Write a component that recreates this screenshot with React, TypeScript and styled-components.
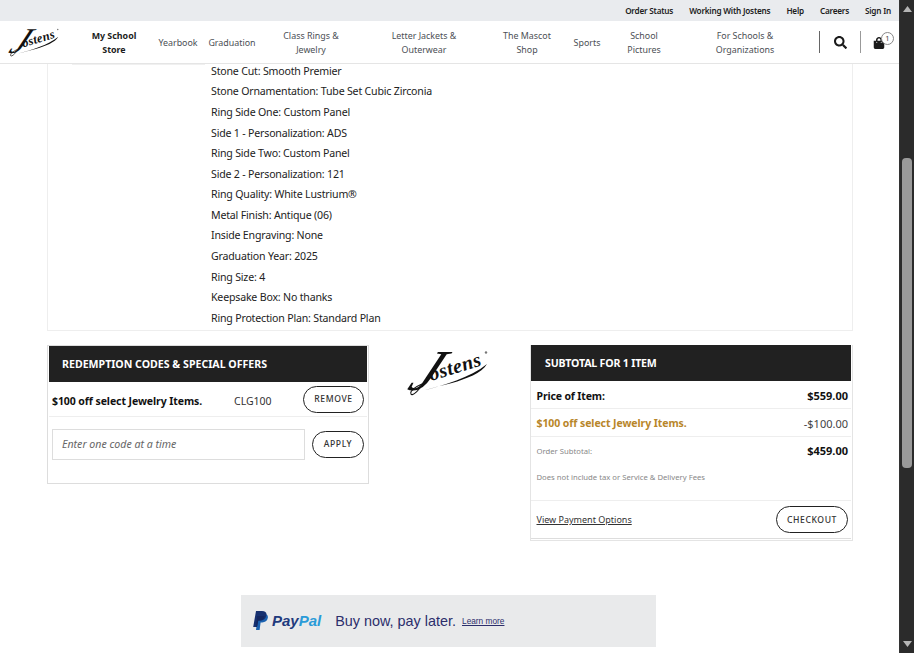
import React from "react";
import styled, { createGlobalStyle } from "styled-components";
import { FaSearch, FaShoppingBag } from "react-icons/fa";

const Global = createGlobalStyle`
  html, body { margin: 0; padding: 0; height: 653px; overflow: hidden; background: #fff; }
  * { box-sizing: border-box; }
  body { font-family: "Noto Sans", "Open Sans", sans-serif; color: #222; }
`;

const Shell = styled.div`display: flex; width: 914px; height: 653px; overflow: hidden;`;
const Page = styled.div`width: 899px; height: 653px; display: flex; flex-direction: column; overflow: hidden;`;

const Track = styled.div`width: 15px; height: 653px; background: #2b2b2b; display: flex; flex-direction: column; align-items: center; border-left: 1px solid #333;`;
const Arrow = styled.svg`width: 9px; height: 6px; flex: none; fill: #b5b5b5;`;
const ArrowUp = styled(Arrow)`margin-top: 6px;`;
const ArrowDown = styled(Arrow)`margin-top: auto; margin-bottom: 6px;`;
const Thumb = styled.div`width: 10px; height: 310px; margin-top: 146px; background: #9a9a9a; border-radius: 4px;`;

const TopBar = styled.div`height: 21px; background: #e9ebee; display: flex; justify-content: flex-end; align-items: center; gap: 16px; padding-right: 8px;`;
const TopLink = styled.a`font-size: 8.2px; font-weight: 600; letter-spacing: -0.22px; color: #1d1d1d; white-space: nowrap;`;

const Nav = styled.nav`height: 43px; display: flex; align-items: center; background: #fff; border-bottom: 1px solid #e5e5e5; flex: none; position: relative; z-index: 1;`;
const LogoCell = styled.div`width: 72px; flex: none; display: flex; padding-left: 10px; padding-top: 1px;`;
const NavItem = styled.a<{ $w: number; $bold?: boolean }>`
  width: ${p => p.$w}px; flex: none; text-align: center; font-size: 8.9px; line-height: 14px; padding-top: 2px;
  color: ${p => (p.$bold ? "#1c1c1c" : "#4c4f55")}; font-weight: ${p => (p.$bold ? 700 : 400)};
`;
const Tools = styled.div`display: flex; align-items: center; margin-left: 7px;`;
const ToolDivider = styled.div<{ $soft?: boolean }>`width: 1px; height: 22px; background: ${p => (p.$soft ? "#999" : "#666")};`;
const SearchCell = styled.div`width: 40px; display: flex; justify-content: center; color: #1a1a1a; font-size: 13px; line-height: 0;`;
const BagCell = styled.div`width: 39px; display: flex; justify-content: center; position: relative; color: #1a1a1a; font-size: 12px; line-height: 0; padding: 2px 3px 0 0;`;
const Badge = styled.span`position: absolute; top: -3px; left: 20px; width: 13px; height: 13px; border-radius: 50%; border: 1px solid #888; background: #fff; font-size: 7.5px; line-height: 11px; text-align: center; color: #444;`;

const Main = styled.main`flex: 1; padding: 0 47px; overflow: hidden; display: flex; flex-direction: column;`;
const ItemCard = styled.section`width: 806px; height: 267px; border: 1px solid #eee; border-top: 0; padding-left: 24px; flex: none; display: flex;`;
const ThumbEdge = styled.div`width: 133px; height: 1px; margin-right: 6px; background: #f0f0f0; flex: none;`;
const OptionList = styled.ul`list-style: none; margin: -3.2px 0 0; padding: 0;`;
const Option = styled.li`font-size: 10.6px; line-height: 20.58px; letter-spacing: -0.19px; color: #222; white-space: nowrap;`;

const Summary = styled.div`display: flex; align-items: flex-start; margin-top: 14px; width: 806px;`;
const CodeBox = styled.section`width: 322px; height: 139px; border: 1px solid #ddd; padding: 0 1px; flex: none;`;
const BoxHead = styled.h2<{ $h: number; $pad: number; $track?: number }>`margin: 0; height: ${p => p.$h}px; background: #212121; color: #fff; font-size: 10.6px; font-weight: 700; letter-spacing: ${p => p.$track ?? 0}px; display: flex; align-items: center; padding-left: ${p => p.$pad}px; white-space: nowrap;`;
const CodeRow = styled.div`height: 35px; border-bottom: 1px solid #eee; display: flex; align-items: center; padding: 0 3px;`;
const OfferName = styled.span`font-size: 10.5px; font-weight: 700; color: #111; width: 182px; white-space: nowrap; letter-spacing: -0.08px; padding-top: 3px;`;
const CodeValue = styled.span`font-size: 10.5px; color: #333; width: 69px; padding-top: 3px;`;
const Pill = styled.button<{ $w: number }>`width: ${p => p.$w}px; height: 27px; border: 1px solid #222; border-radius: 14px; background: #fff; font-family: inherit; font-size: 8.6px; font-weight: 500; letter-spacing: 0.6px; color: #333; padding: 0; flex: none;`;
const EntryRow = styled.div`display: flex; align-items: flex-start; padding: 12px 3px 0; gap: 7px;`;
const CodeInput = styled.div`width: 253px; height: 31px; border: 1px solid #ddd; display: flex; align-items: center; padding: 0 0 2px 9px; font-size: 10.6px; font-style: italic; color: #666;`;
const ApplyWrap = styled.div`padding-top: 1px;`;

const LogoColumn = styled.div`width: 161px; flex: none; display: flex; justify-content: center; padding-top: 5px; padding-right: 1px;`;

const TotalBox = styled.section`width: 323px; height: 196px; border: 1px solid #e4e4e4; border-top: 0; padding-right: 1px; flex: none;`;
const TotalRow = styled.div<{ $line?: boolean; $h?: number; $lift?: number }>`height: ${p => p.$h ?? 28}px; display: flex; justify-content: space-between; align-items: center; padding: ${p => p.$lift ?? 1}px 3px 0 5.5px; ${p => p.$line && "border-bottom: 1px solid #eee;"}`;
const TotalLabel = styled.span`font-size: 10.5px; font-weight: 700; color: #111; letter-spacing: -0.14px;`;
const PromoLabel = styled(TotalLabel)`color: #b8862a; letter-spacing: -0.08px;`;
const Amount = styled.span`font-size: 11px; font-weight: 700; color: #111;`;
const PlainAmount = styled.span`font-size: 11px; color: #444;`;
const Fine = styled.span`font-size: 7.7px; color: #888;`;
const FineRow = styled.div`height: 37px; padding: 0 5.5px 10px; display: flex; align-items: center; border-bottom: 1px solid #eee;`;
const FootRow = styled.div`height: 38px; display: flex; justify-content: space-between; align-items: center; padding: 0 3px 0 5.5px; border-bottom: 1px solid #ddd;`;
const PayLink = styled.a`font-size: 9px; color: #333; text-decoration: underline;`;

const Banner = styled.aside`margin: 54px 0 0 194px; width: 415px; height: 52px; background: #e9eaeb; flex: none; display: flex; align-items: center; padding: 0 0 1px 12px;`;
const PayMark = styled.svg`width: 15px; height: 19px; flex: none;`;
const PayWord = styled.span`margin-left: 4px; font: italic 700 15px "Liberation Sans", Arial, sans-serif; color: #1f3a7d;`;
const PayWordLight = styled.span`color: #2a9bd8;`;
const PayText = styled.span`margin-left: 14px; font: 14.4px "Liberation Sans", Arial, sans-serif; color: #2c2e6b; white-space: nowrap;`;
const PayLearn = styled.a`margin-left: 6px; font: 8.3px "Liberation Sans", Arial, sans-serif; color: #2c2e6b; text-decoration: underline;`;

const LogoSvg = styled.svg<{ $w: number }>`width: ${p => p.$w}px; height: auto; display: block; flex: none; overflow: visible;`;

const Logo = ({ width }: { width: number }) => (
  <LogoSvg $w={width} viewBox="0 0 78 46" role="img" aria-label="Jostens">
    <g fontFamily="'Liberation Serif', serif" fontStyle="italic" fill="#111">
      <text transform="translate(-4 40) skewX(-26)" fontSize="58" fontWeight="400">J</text>
      <text transform="translate(21 31) rotate(-17)" fontSize="20" fontWeight="700" letterSpacing="0.5">ostens</text>
    </g>
    <path d="M12 41 C34 35 60 28 77 14 C72 23 56 29 42 33 C32 35.5 22 38 12 41 Z" fill="#111" />
    <path d="M10 38 C6 43 2 46 1 44 C0 41 5 37 12 34" fill="none" stroke="#111" strokeWidth="1.1" />
    <circle cx="76" cy="2.5" r="1.2" fill="#777" />
  </LogoSvg>
);

const navItems: [number, React.ReactNode, boolean?][] = [
  [84, <>My School<br />Store</>, true],
  [44, "Yearbook"],
  [64, "Graduation"],
  [94, <>Class Rings &amp;<br />Jewelry</>],
  [132, <>Letter Jackets &amp;<br />Outerwear</>],
  [74, <>The Mascot<br />Shop</>],
  [46, "Sports"],
  [68, <>School<br />Pictures</>],
  [134, <>For Schools &amp;<br />Organizations</>],
];

const options = [
  "Stone Cut: Smooth Premier",
  "Stone Ornamentation: Tube Set Cubic Zirconia",
  "Ring Side One: Custom Panel",
  "Side 1 - Personalization: ADS",
  "Ring Side Two: Custom Panel",
  "Side 2 - Personalization: 121",
  "Ring Quality: White Lustrium®",
  "Metal Finish: Antique (06)",
  "Inside Engraving: None",
  "Graduation Year: 2025",
  "Ring Size: 4",
  "Keepsake Box: No thanks",
  "Ring Protection Plan: Standard Plan",
];

export default function App() {
  return (
    <Shell>
      <Global />
      <Page>
        <TopBar>
          {["Order Status", "Working With Jostens", "Help", "Careers", "Sign In"].map(t => (
            <TopLink key={t}>{t}</TopLink>
          ))}
        </TopBar>
        <Nav>
          <LogoCell><Logo width={49} /></LogoCell>
          {navItems.map(([w, label, bold], i) => (
            <NavItem key={i} $w={w} $bold={bold}>{label}</NavItem>
          ))}
          <Tools>
            <ToolDivider />
            <SearchCell><FaSearch /></SearchCell>
            <ToolDivider $soft />
            <BagCell><FaShoppingBag /><Badge>1</Badge></BagCell>
          </Tools>
        </Nav>
        <Main>
          <ItemCard>
            <ThumbEdge />
            <OptionList>
              {options.map(o => <Option key={o}>{o}</Option>)}
            </OptionList>
          </ItemCard>
          <Summary>
            <CodeBox>
              <BoxHead $h={36} $pad={13}>REDEMPTION CODES &amp; SPECIAL OFFERS</BoxHead>
              <CodeRow>
                <OfferName>$100 off select Jewelry Items.</OfferName>
                <CodeValue>CLG100</CodeValue>
                <Pill $w={61}>REMOVE</Pill>
              </CodeRow>
              <EntryRow>
                <CodeInput>Enter one code at a time</CodeInput>
                <ApplyWrap><Pill $w={52}>APPLY</Pill></ApplyWrap>
              </EntryRow>
            </CodeBox>
            <LogoColumn><Logo width={78} /></LogoColumn>
            <TotalBox>
              <BoxHead $h={36} $pad={14} $track={-0.18}>SUBTOTAL FOR 1 ITEM</BoxHead>
              <TotalRow $line $lift={2}><TotalLabel>Price of Item:</TotalLabel><Amount>$559.00</Amount></TotalRow>
              <TotalRow $line><PromoLabel>$100 off select Jewelry Items.</PromoLabel><PlainAmount>-$100.00</PlainAmount></TotalRow>
              <TotalRow $h={27} $lift={0}><Fine>Order Subtotal:</Fine><Amount>$459.00</Amount></TotalRow>
              <FineRow><Fine>Does not include tax or Service &amp; Delivery Fees</Fine></FineRow>
              <FootRow><PayLink>View Payment Options</PayLink><Pill $w={72}>CHECKOUT</Pill></FootRow>
            </TotalBox>
          </Summary>
          <Banner>
            <PayMark viewBox="0 0 15 19">
              <path d="M5 3h6.4c2.6 0 3.9 1.6 3.4 4-.6 2.9-2.8 4.4-5.5 4.4H7.6L6.6 19H3Z" fill="#1b62b0" />
              <path d="M3 0h6c3.5 0 5 2 4.4 4.6C12.7 8 10.4 9.6 7.4 9.6H5.2L4 16H0.2Z" fill="#16306f" />
              <path d="M4.2 5h7.6c-.7 3-2.4 4.6-5 4.6H5.2L4 16H3.2Z" fill="#14275f" />
            </PayMark>
            <PayWord>Pay<PayWordLight>Pal</PayWordLight></PayWord>
            <PayText>Buy now, pay later.</PayText>
            <PayLearn>Learn more</PayLearn>
          </Banner>
        </Main>
      </Page>
      <Track>
        <ArrowUp viewBox="0 0 9 6"><path d="M4.5 0 9 6H0Z" /></ArrowUp>
        <Thumb />
        <ArrowDown viewBox="0 0 9 6"><path d="M0 0h9L4.5 6Z" /></ArrowDown>
      </Track>
    </Shell>
  );
}
